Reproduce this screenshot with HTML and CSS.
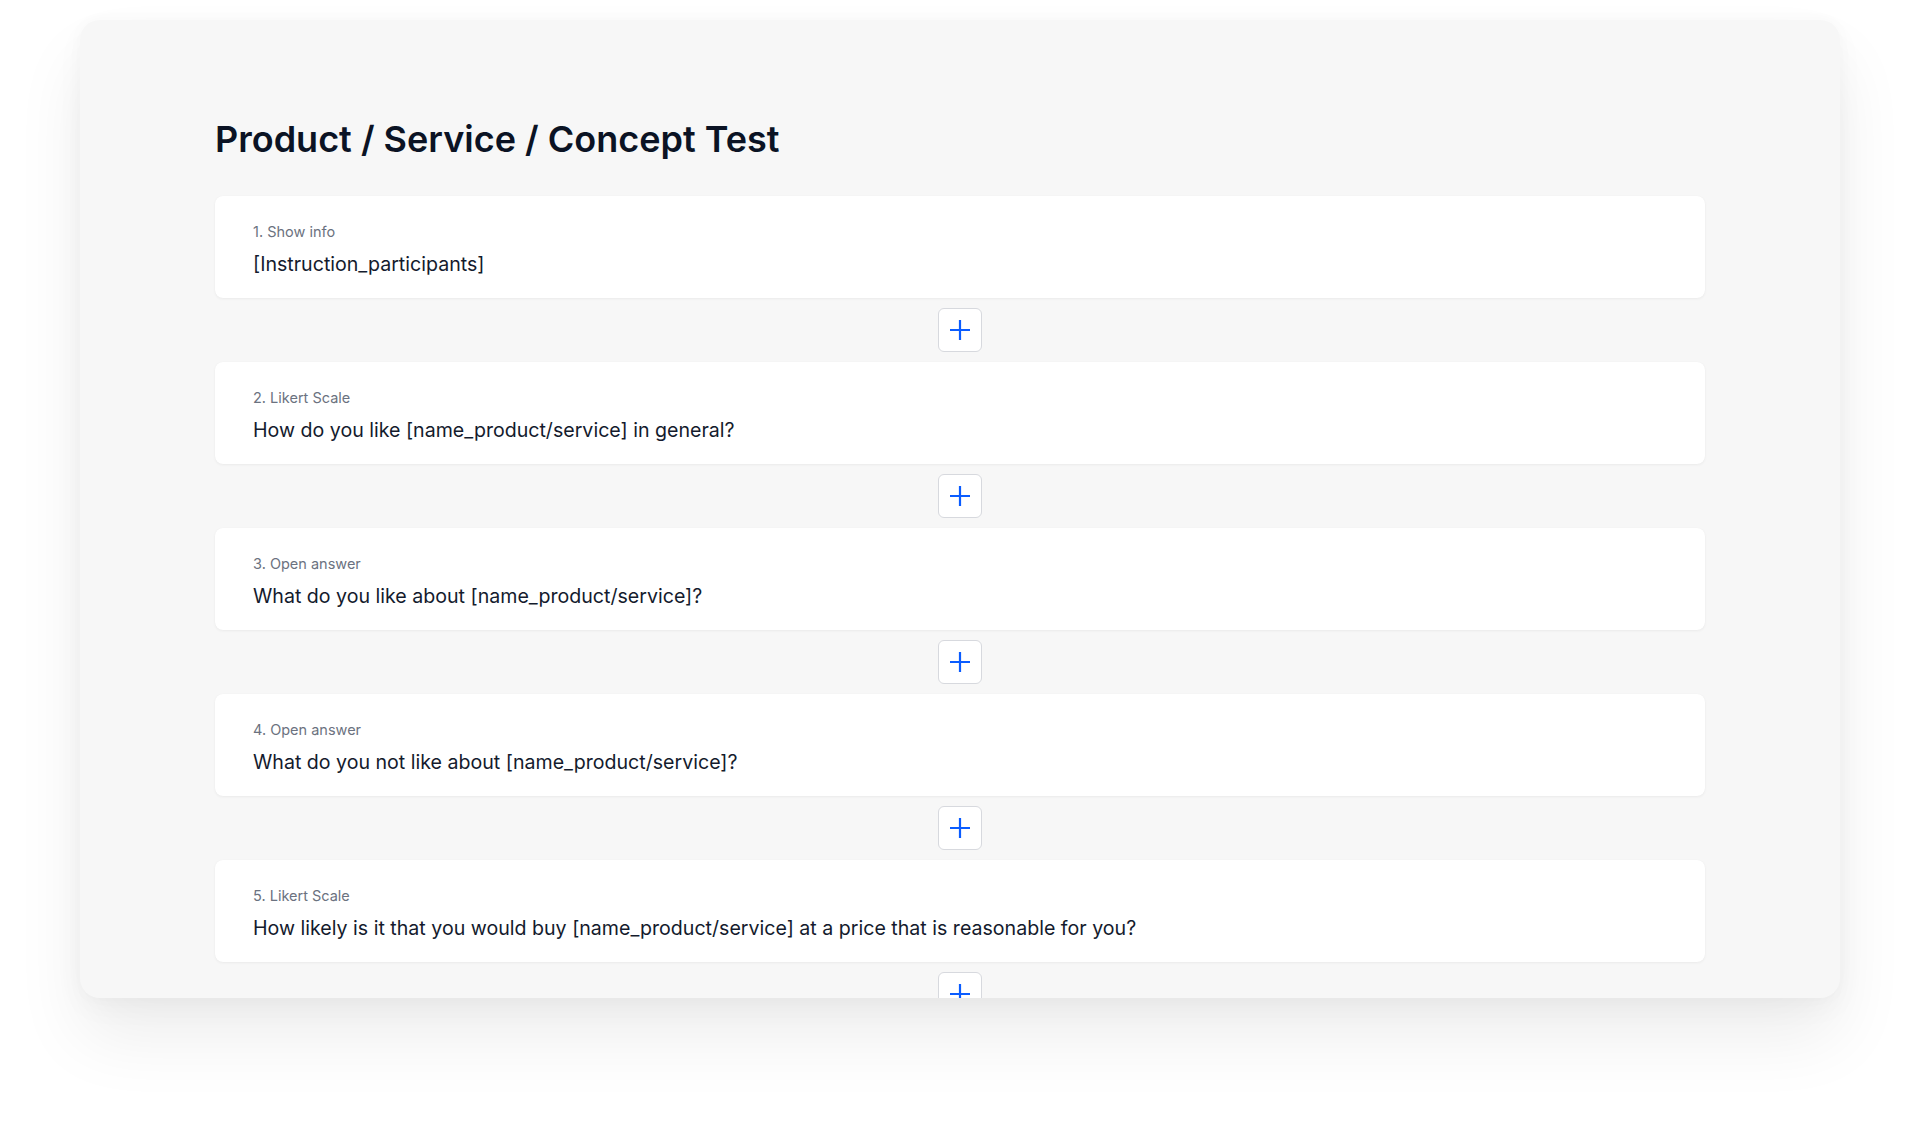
FILE: index.html
```html
<!DOCTYPE html>
<html lang="en">
<head>
<meta charset="utf-8">
<title>Product / Service / Concept Test</title>
<link rel="stylesheet" href="styles.css">
</head>
<body>
<div class="panel">
  <h1 class="title">Product / Service / Concept Test</h1>
  <div class="list">
    <div class="card">
      <div class="label">1. Show info</div>
      <div class="text">[Instruction_participants]</div>
    </div>
    <div class="adder"><button class="add"><svg width="20" height="20" viewBox="0 0 20 20"><path d="M10 0V20M0 10H20" stroke="#0a5cff" stroke-width="2.2"/></svg></button></div>
    <div class="card">
      <div class="label">2. Likert Scale</div>
      <div class="text">How do you like [name_product/service] in general?</div>
    </div>
    <div class="adder"><button class="add"><svg width="20" height="20" viewBox="0 0 20 20"><path d="M10 0V20M0 10H20" stroke="#0a5cff" stroke-width="2.2"/></svg></button></div>
    <div class="card">
      <div class="label">3. Open answer</div>
      <div class="text">What do you like about [name_product/service]?</div>
    </div>
    <div class="adder"><button class="add"><svg width="20" height="20" viewBox="0 0 20 20"><path d="M10 0V20M0 10H20" stroke="#0a5cff" stroke-width="2.2"/></svg></button></div>
    <div class="card">
      <div class="label">4. Open answer</div>
      <div class="text">What do you not like about [name_product/service]?</div>
    </div>
    <div class="adder"><button class="add"><svg width="20" height="20" viewBox="0 0 20 20"><path d="M10 0V20M0 10H20" stroke="#0a5cff" stroke-width="2.2"/></svg></button></div>
    <div class="card">
      <div class="label">5. Likert Scale</div>
      <div class="text">How likely is it that you would buy [name_product/service] at a price that is reasonable for you?</div>
    </div>
    <div class="adder"><button class="add"><svg width="20" height="20" viewBox="0 0 20 20"><path d="M10 0V20M0 10H20" stroke="#0a5cff" stroke-width="2.2"/></svg></button></div>
  </div>
</div>
</body>
</html>
```

FILE: styles.css
```css
* { box-sizing: border-box; }
html, body { margin: 0; padding: 0; background: #ffffff; }
body {
  font-family: Inter, "Noto Sans", "Liberation Sans", sans-serif;
  width: 1918px;
  height: 1135px;
  overflow: hidden;
}
.panel {
  margin: 20px 0 0 80px;
  width: 1760px;
  height: 978px;
  background: #f7f7f7;
  border-radius: 20px;
  overflow: hidden;
  padding: 97px 135px 0 135px;
  box-shadow: 0 40px 70px rgba(0, 0, 0, 0.07), 0 10px 30px rgba(0, 0, 0, 0.03), 0 0 16px rgba(0, 0, 0, 0.025);
}
.title {
  margin: 0 0 35px 0;
  font-size: 36px;
  line-height: 44px;
  font-weight: 600;
  color: #0b1324;
}
.list {
  display: flex;
  flex-direction: column;
}
.card {
  background: #ffffff;
  border-radius: 8px;
  padding: 27px 38px 22px 38px;
  box-shadow: 0 1px 3px rgba(0, 0, 0, 0.05), 0 0 1px rgba(0, 0, 0, 0.04);
}
.label {
  font-size: 14.5px;
  line-height: 18px;
  color: #6b7280;
}
.text {
  margin-top: 11px;
  font-size: 19.6px;
  line-height: 24px;
  color: #141b2d;
}
.adder {
  display: flex;
  justify-content: center;
  padding: 10px 0;
}
.add {
  width: 44px;
  height: 44px;
  padding: 0;
  border: 1px solid #d7d9de;
  border-radius: 6px;
  background: #ffffff;
  display: flex;
  align-items: center;
  justify-content: center;
}
.add svg { display: block; }
```
